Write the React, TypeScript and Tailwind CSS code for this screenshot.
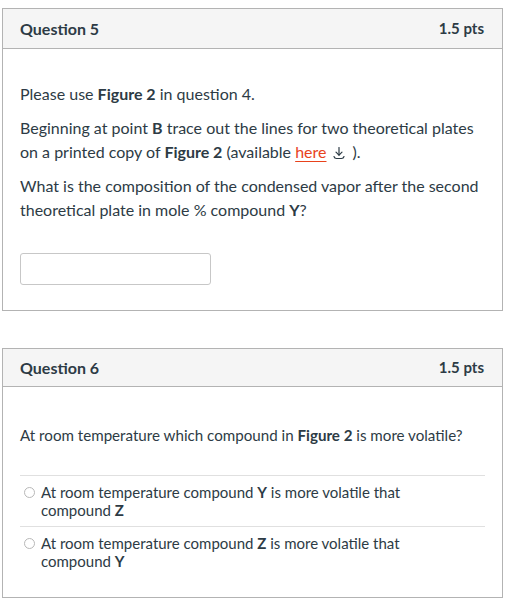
import React from "react";

const font = { fontFamily: "Lato, 'Noto Sans', sans-serif" };

function DownloadIcon() {
  return (
    <svg width="14" height="14" viewBox="0 0 14 14" className="inline-block align-[-2px] mx-[6px]" fill="none" stroke="#2d3b45" strokeWidth="1.2" strokeLinecap="round">
      <path d="M7 1.5 V9" />
      <path d="M4 6.2 L7 9.2 L10 6.2" />
      <path d="M2 10.5 Q2.5 12.5 4.5 12.5 H9.5 Q11.5 12.5 12 10.5" />
    </svg>
  );
}

function Header({ title, short }: { title: string; short?: boolean }) {
  return (
    <div className={`flex items-center justify-between ${short ? "h-[38px]" : "h-[40px]"} bg-[#f5f5f5] border-b border-[#b3b3b3] pl-[17px] pr-[18px]`}>
      <span className="font-bold text-[16px]">{title}</span>
      <span className="font-bold text-[15px] text-[#2d3b45]">1.5 pts</span>
    </div>
  );
}

function Radio() {
  return <span className="mt-[4px] w-[11px] h-[11px] rounded-full border border-[#b8b8b8] shrink-0" />;
}

export default function App() {
  return (
    <div className="bg-white w-[509px] h-[602px] pt-[8px] pl-[2px] text-[#2d3b45]" style={font}>
      <div className="w-[501px] border border-[#b3b3b3]">
        <Header title="Question 5" />
        <div className="pt-[33px] pb-[25px] px-[17px] text-[16px] leading-[24px]">
          <p className="mb-[10px]">
            Please use <b>Figure 2</b> in question 4.
          </p>
          <p className="mb-[10px]">
            Beginning at point <b>B</b> trace out the lines for two theoretical plates on a printed copy of <b>Figure 2</b> (available{" "}
            <span className="text-[#e8421b] underline underline-offset-[3px]">here</span>
            <DownloadIcon />).
          </p>
          <p>
            What is the composition of the condensed vapor after the second theoretical plate in mole % compound <b>Y</b>?
          </p>
          <div className="mt-[31px] w-[191px] h-[32px] border border-[#c7c7c7] rounded-[3px]" />
        </div>
      </div>

      <div className="mt-[37px] w-[501px] border border-[#b3b3b3]">
        <Header title="Question 6" short />
        <div className="pt-[36px] pb-[20px] px-[17px] text-[15px]">
          <p className="leading-[24px] text-[15.15px]">
            At room temperature which compound in <b>Figure 2</b> is more volatile?
          </p>
          <div className="mt-[28px] border-t border-[#e0e0e0]">
            <div className="flex gap-[6px] pl-[4px] py-[7px] leading-[18px] border-b border-[#e0e0e0]">
              <Radio />
              <span>
                At room temperature compound <b>Y</b> is more volatile that
                <br />
                compound <b>Z</b>
              </span>
            </div>
            <div className="flex gap-[6px] pl-[4px] py-[7px] leading-[18px]">
              <Radio />
              <span>
                At room temperature compound <b>Z</b> is more volatile that
                <br />
                compound <b>Y</b>
              </span>
            </div>
          </div>
        </div>
      </div>
    </div>
  );
}
